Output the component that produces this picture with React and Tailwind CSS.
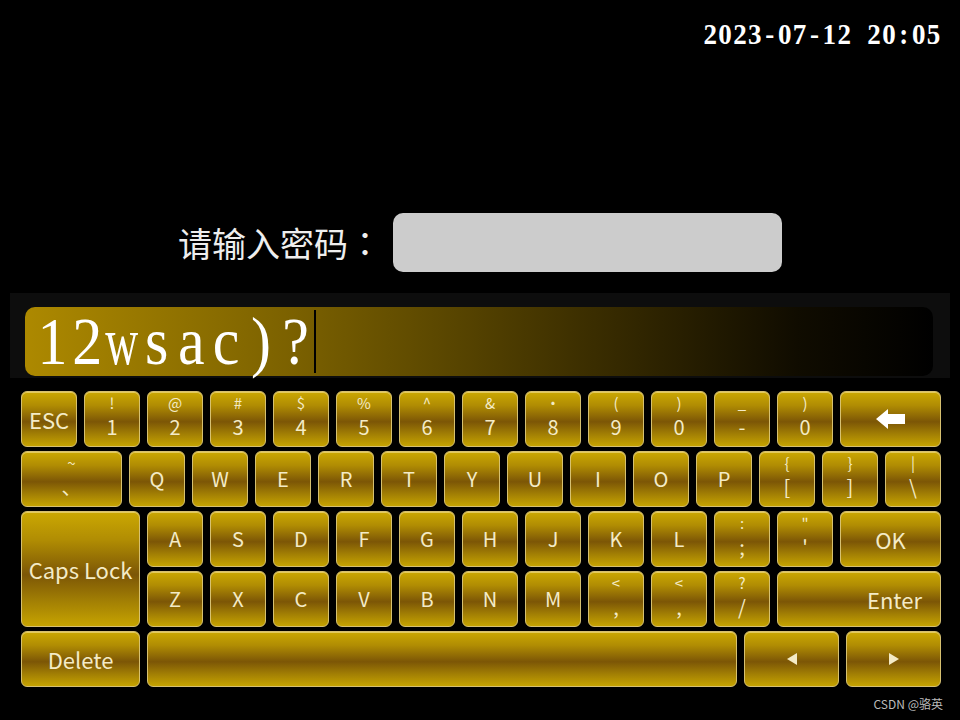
const keyBg =
  "bg-[linear-gradient(to_bottom,#cba802_0%,#b08c03_25%,#7c5606_55%,#a27f04_78%,#c6a300_100%)]";

function Key({ w = 56, h = 56, top, label, big, align = "center", children }) {
  return (
    <div
      className={`${keyBg} shrink-0 rounded-[6px] border border-[#d6c070] shadow-[inset_0_1px_0_rgba(255,240,180,0.5)] flex flex-col justify-center text-[#f4ebc6] ${
        align === "right" ? "items-end pr-[18px]" : "items-center"
      }`}
      style={{ width: w, height: h }}
    >
      {children}
      {top !== undefined && (
        <span className="text-[15px] leading-[16px] -mt-[4px]">{top}</span>
      )}
      {label !== undefined && (
        <span
          className={`${big ? "text-[22px]" : "text-[20px]"} leading-[24px] ${
            top !== undefined ? "mt-[4px]" : ""
          }`}
        >
          {label}
        </span>
      )}
    </div>
  );
}

// fixed-pitch serif text, like the bitmap font on the device
function MonoText({ text, cell, className }) {
  return (
    <span className={`flex ${className}`} style={{ fontFamily: '"Liberation Serif", serif' }}>
      {text.split("").map((c, i) => (
        <span
          key={i}
          className="inline-flex justify-center shrink-0 overflow-visible"
          style={{ width: cell }}
        >
          <span className={c === "w" ? "inline-block scale-x-[0.76]" : "inline-block"}>
            {c === " " ? "\u00a0" : c}
          </span>
        </span>
      ))}
    </span>
  );
}

const row1 = [
  ["!", "1"], ["@", "2"], ["#", "3"], ["$", "4"], ["%", "5"], ["^", "6"],
  ["&", "7"], ["•", "8"], ["(", "9"], [")", "0"], ["_", "-"], [")", "0"],
];
const row2 = ["Q", "W", "E", "R", "T", "Y", "U", "I", "O", "P"];
const row3 = ["A", "S", "D", "F", "G", "H", "J", "K", "L"];
const row4 = ["Z", "X", "C", "V", "B", "N", "M"];

function BackArrow() {
  return (
    <svg width="30" height="20" viewBox="0 0 30 20">
      <polygon points="0,10 12,0 12,5 29,5 29,15 12,15 12,20" fill="#ffffff" />
    </svg>
  );
}

function Tri({ dir }) {
  return (
    <svg width="10" height="12" viewBox="0 0 10 12">
      {dir === "left" ? (
        <polygon points="0,6 10,0 10,12" fill="#f4ebc6" />
      ) : (
        <polygon points="10,6 0,0 0,12" fill="#f4ebc6" />
      )}
    </svg>
  );
}

export default function App() {
  return (
    <div
      className="w-[960px] h-[720px] bg-black flex flex-col relative overflow-hidden"
      style={{ fontFamily: '"Noto Sans CJK SC", "Noto Sans", sans-serif' }}
    >
      {/* clock */}
      <div className="flex justify-end pt-[19px] pr-[19px] h-[213px]">
        <MonoText
          text="2023-07-12 20:05"
          cell={14.9}
          className="text-white font-bold text-[27px] leading-[28px] scale-y-[1.1] origin-top"
        />
      </div>

      {/* password row */}
      <div className="flex justify-center items-center h-[59px]">
        <span className="text-[#eeeeee] text-[34px] leading-[40px] w-[215px] flex">
          请输入密码
          <span style={{ fontFamily: '"Noto Sans CJK TC", sans-serif' }}>：</span>
        </span>
        <div className="w-[389px] h-[59px] bg-[#cccccc] rounded-[10px]" />
      </div>

      {/* input panel */}
      <div className="mt-[21px] mx-[10px] bg-[#0d0d0d] pt-[14px] pb-[2px] pl-[15px] pr-[17px]">
        <div className="h-[69px] rounded-[10px] bg-[linear-gradient(to_right,#ad8900_0%,#7a6000_30%,#3f3100_60%,#100c00_85%,#000000_100%)] flex items-stretch pl-[10px] py-[3px]">
          <MonoText
            text="12wsac)?"
            cell={34.75}
            className="text-white text-[60px] leading-[63px] scale-y-[1.13] items-center"
          />
          <div className="w-[2px] bg-black ml-[1px]" />
        </div>
      </div>

      {/* keyboard */}
      <div className="mt-[13px] ml-[21px] flex flex-col gap-[4px]">
        <div className="flex gap-[7px]">
          <Key label="ESC" big />
          {row1.map(([t, l], i) => (
            <Key key={i} top={t} label={l} />
          ))}
          <Key w={101}>
            <BackArrow />
          </Key>
        </div>

        <div className="flex gap-[7px]">
          <Key w={101} top="~" label="、" />
          {row2.map((l) => (
            <Key key={l} label={l} />
          ))}
          <Key top="{" label="[" />
          <Key top="}" label="]" />
          <Key top="|" label="\" />
        </div>

        <div className="flex gap-[7px]">
          <Key w={119} h={116} label="Caps Lock" big />
          <div className="flex flex-col gap-[4px]">
            <div className="flex gap-[7px]">
              {row3.map((l) => (
                <Key key={l} label={l} />
              ))}
              <Key top=":" label=";" />
              <Key top={'"'} label="'" />
              <Key w={101} label="OK" big />
            </div>
            <div className="flex gap-[7px]">
              {row4.map((l) => (
                <Key key={l} label={l} />
              ))}
              <Key top="<" label="," />
              <Key top="<" label="," />
              <Key top="?" label="/" />
              <Key w={164} label="Enter" big align="right" />
            </div>
          </div>
        </div>

        <div className="flex gap-[7px]">
          <Key w={119} label="Delete" big />
          <Key w={590} />
          <Key w={95}>
            <Tri dir="left" />
          </Key>
          <Key w={95}>
            <Tri dir="right" />
          </Key>
        </div>
      </div>

      <span className="absolute right-[17px] bottom-[9px] text-[12px] leading-[14px] text-[#bbbbbb]">
        CSDN @骆英
      </span>
    </div>
  );
}
